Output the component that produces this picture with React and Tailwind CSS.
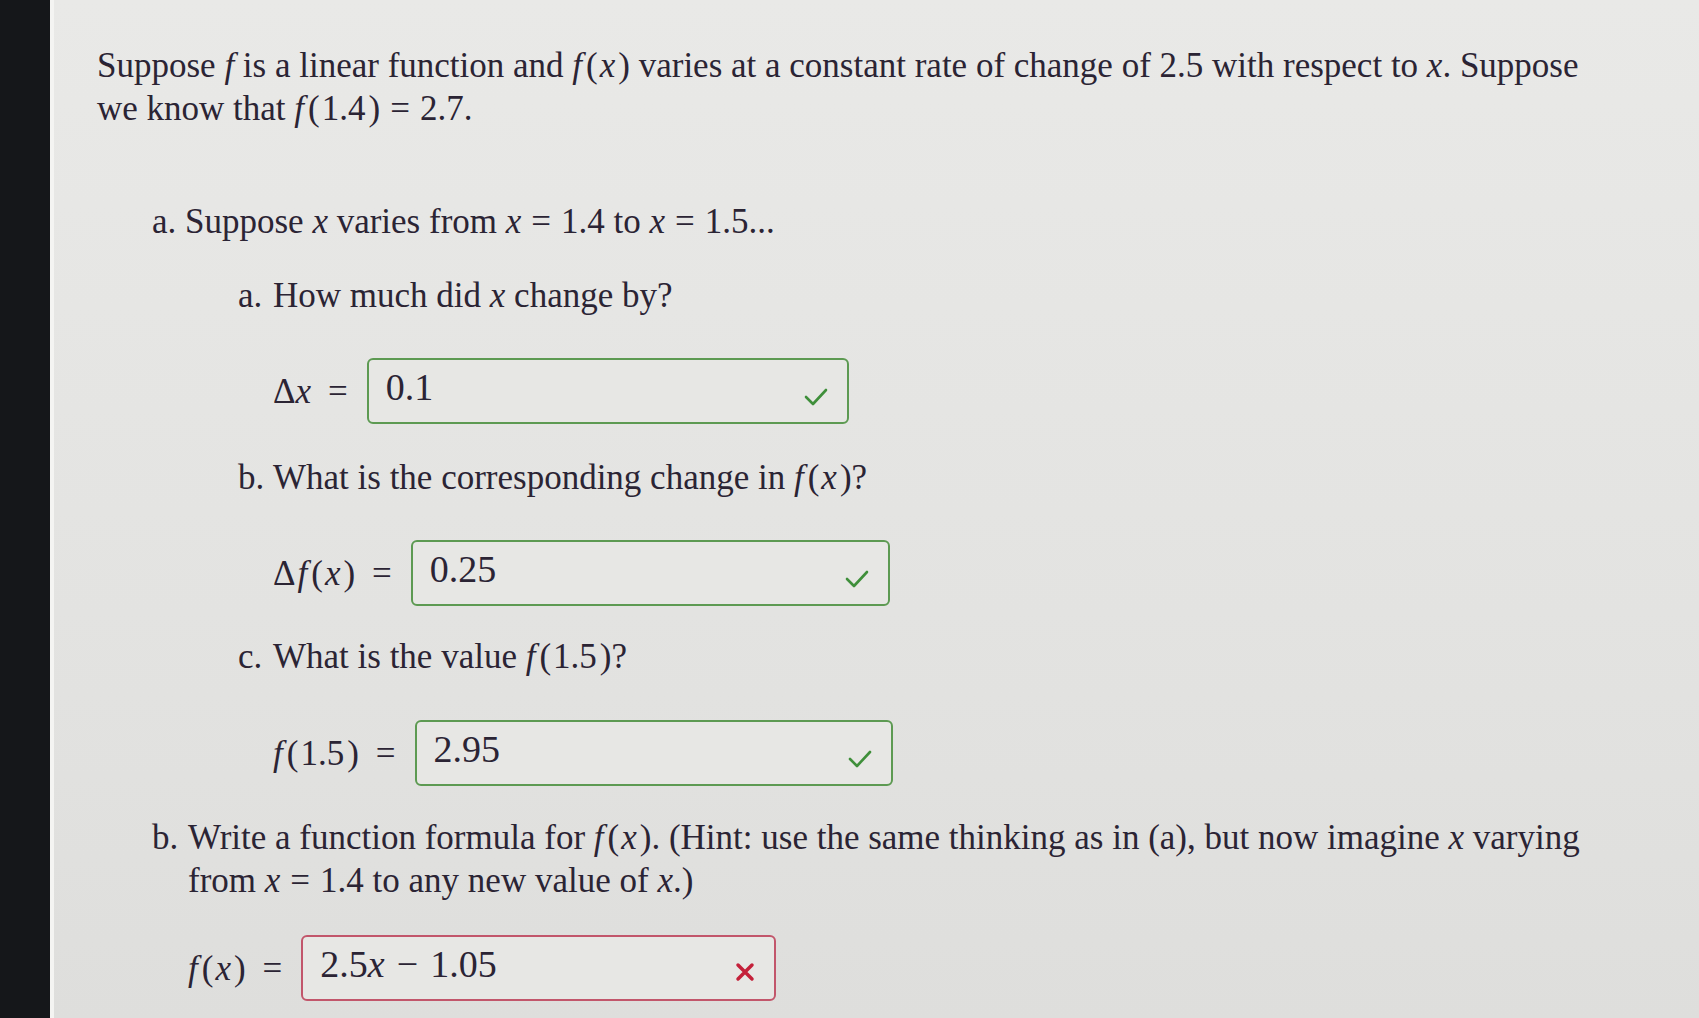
import React from "react";

const I = ({ children }) => <span className="italic">{children}</span>;
const F = ({ children }) => (
  <>
    <I>f</I>
    <span className="ml-[4px] mr-[2px]">(</span>
    {children}
    <span className="ml-[3px]">)</span>
  </>
);
const Eq = () => <span className="mx-[10px]">=</span>;

const Check = () => (
  <svg width="26" height="22" viewBox="0 0 26 22" fill="none" className="mt-[12px]">
    <path d="M3 11 L10 18 L23 4" stroke="#3f8f3a" strokeWidth="2.6" strokeLinecap="round" strokeLinejoin="round" />
  </svg>
);

const Cross = () => (
  <svg width="22" height="22" viewBox="0 0 22 22" fill="none" className="mt-[8px]">
    <path d="M4 4 L18 18 M18 4 L4 18" stroke="#c4213a" strokeWidth="3.5" strokeLinecap="round" />
  </svg>
);

const AnswerBox = ({ value, ok = true, width }) => (
  <div
    className={`${width} h-[66px] rounded-[6px] border-2 ${
      ok ? "border-[#5d9a52]" : "border-[#c2566b]"
    } bg-[#e7e7e4] flex items-center justify-between pl-[17px] pr-[18px] text-[38px]`}>
    <span className="-mt-[8px]">{value}</span>
    {ok ? <Check /> : <Cross />}
  </div>
);

const Answer = ({ label, value, ok, width, className = "" }) => (
  <div className={`flex items-center ${className}`}>
    <span>{label}</span>
    <span className="ml-[17px] mr-[19px]">=</span>
    <AnswerBox value={value} ok={ok} width={width} />
  </div>
);

export default function App() {
  return (
    <div className="flex min-h-screen font-['Liberation_Serif',serif] text-[#2b2434]">
      <div className="w-[50px] shrink-0 bg-[#15171a]" />
      <div className="w-[4px] shrink-0 bg-[#f4f4f2]" />
      <div className="flex-1 bg-[linear-gradient(180deg,#e9e9e7_0%,#e3e3e1_60%,#dededc_100%)] pl-[43px] pt-[44px] pb-[20px] text-[35px] leading-[43px]">
        <p className="max-w-[1490px]">
          Suppose <I>f</I> is a linear function and <F><I>x</I></F> varies at a constant rate of change of 2.5 with
          respect to <I>x</I>. Suppose we know that <F>1.4</F>
          <Eq />
          2.7.
        </p>

        <div className="ml-[55px] mt-[70px]">
          <div className="flex">
            <span className="w-[33px]">a.</span>
            <span>
              Suppose <I>x</I> varies from <I>x</I>
              <Eq />
              1.4 to <I>x</I>
              <Eq />
              1.5...
            </span>
          </div>

          <div className="ml-[86px] mt-[31px]">
            <div className="flex">
              <span className="w-[35px]">a.</span>
              <span>
                How much did <I>x</I> change by?
              </span>
            </div>
            <Answer
              className="ml-[35px] mt-[41px]"
              label={<>Δ<I>x</I></>}
              value="0.1"
              width="w-[482px]"
            />

            <div className="flex mt-[32px]">
              <span className="w-[35px]">b.</span>
              <span>
                What is the corresponding change in <F><I>x</I></F>?
              </span>
            </div>
            <Answer
              className="ml-[35px] mt-[41px]"
              label={<>Δ<span className="ml-[2px]" /><F><I>x</I></F></>}
              value="0.25"
              width="w-[479px]"
            />

            <div className="flex mt-[29px]">
              <span className="w-[35px]">c.</span>
              <span>
                What is the value <F>1.5</F>?
              </span>
            </div>
            <Answer
              className="ml-[35px] mt-[42px]"
              label={<F>1.5</F>}
              value="2.95"
              width="w-[478px]"
            />
          </div>

          <div className="flex mt-[30px]">
            <span className="w-[36px] shrink-0">b.</span>
            <span className="max-w-[1410px]">
              Write a function formula for <F><I>x</I></F>. (Hint: use the same thinking as in (a), but now imagine{" "}
              <I>x</I> varying from <I>x</I>
              <Eq />
              1.4 to any new value of <I>x</I>.)
            </span>
          </div>
          <Answer
            className="ml-[36px] mt-[33px]"
            label={<F><I>x</I></F>}
            value={
              <>
                2.5<I>x</I>
                <span className="mx-[12px]">−</span>
                1.05
              </>
            }
            ok={false}
            width="w-[475px]"
          />
        </div>
      </div>
    </div>
  );
}
